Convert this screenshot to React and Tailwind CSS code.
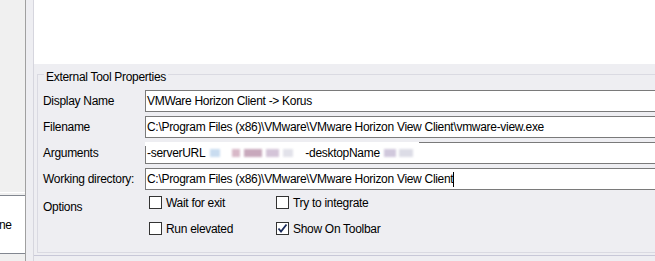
import React from 'react';

const fields = [
  { label: 'Display Name', value: 'VMWare Horizon Client -> Korus' },
  { label: 'Filename', value: 'C:\\Program Files (x86)\\VMware\\VMware Horizon View Client\\vmware-view.exe' },
  { label: 'Arguments', value: null },
  { label: 'Working directory:', value: 'C:\\Program Files (x86)\\VMware\\VMware Horizon View Client', caret: true },
];

const options = [
  { label: 'Wait for exit', checked: false },
  { label: 'Try to integrate', checked: false },
  { label: 'Run elevated', checked: false },
  { label: 'Show On Toolbar', checked: true },
];

const Blur = ({ className }) => <span className={`inline-block h-[8px] blur-[1.2px] ${className}`} />;

const ArgumentsValue = () => (
  <div className="flex items-center">
    <span>-serverURL</span>
    <span className="ml-[5px] flex items-center">
      <Blur className="w-[10px] bg-[#c9dcf0]" />
      <Blur className="ml-[12px] w-[8px] bg-[#d8b8c8]" />
      <Blur className="ml-[4px] w-[18px] bg-[#c8a8bc]" />
      <Blur className="ml-[4px] w-[13px] bg-[#d4c4d8]" />
      <Blur className="ml-[4px] w-[10px] bg-[#e2e2ea]" />
    </span>
    <span className="ml-[12px]">-desktopName</span>
    <span className="ml-[4px] flex items-center">
      <Blur className="w-[12px] bg-[#d0c8dc]" />
      <Blur className="ml-[3px] w-[14px] bg-[#dcdce6]" />
    </span>
  </div>
);

const Checkbox = ({ checked, label }) => (
  <label className="flex items-center h-[13px] whitespace-nowrap">
    <span className="w-[13px] h-[13px] shrink-0 border border-[#333333] bg-white flex items-center justify-center">
      {checked ? (
        <svg width="11" height="11" viewBox="0 0 11 11">
          <path d="M1.5 5.5 L4 8.5 L9.5 1.5" fill="none" stroke="#1a2a5a" strokeWidth="1.8" />
        </svg>
      ) : null}
    </span>
    <span className="ml-[4px]">{label}</span>
  </label>
);

const App = () => {
  return (
    <div
      className="w-[655px] h-[261px] flex bg-[#eeeef2] overflow-hidden text-[12px] tracking-[-0.3px] text-black"
      style={{ fontFamily: '"Liberation Sans", Arial, sans-serif' }}
    >
      <div className="w-[26px] shrink-0 flex flex-col bg-[#f0f0f0] border-r border-[#a0a0a0]">
        <div className="h-[192px]" />
        <div className="h-px bg-white" />
        <div className="h-[2px]" />
        <div className="h-[59px] bg-white border-y border-[#828790] overflow-hidden flex items-center">
          <span className="-ml-[1px] whitespace-nowrap">ne</span>
        </div>
      </div>
      <div className="w-[7px] shrink-0" />
      <div className="flex-1 min-w-0 flex flex-col border-l border-[#d6d6de] overflow-hidden">
        <div className="h-[64px] bg-white shrink-0" />
        <div className="relative mt-[10px] ml-[3px] w-[700px] h-[179px] border border-[#dadae2] pl-[5px] pt-[15px]">
          <span className="absolute -top-[4px] left-[6px] px-[2px] bg-[#eeeef2] leading-[12px]">External Tool Properties</span>
          <div className="flex flex-col gap-[4px]">
            {fields.map((field) => (
              <div key={field.label} className="flex items-center h-[22px]">
                <span className="w-[102px] shrink-0 whitespace-nowrap">{field.label}</span>
                <div className="relative flex-1 h-[22px] border border-[#7a7a7a] bg-white pl-[1px] flex items-center whitespace-nowrap">
                  {field.value === null ? (
                    <>
                      <div className="absolute -top-px -left-px w-[274px] h-[4px] bg-white" />
                      <ArgumentsValue />
                    </>
                  ) : (
                    <span>{field.value}</span>
                  )}
                  {field.caret ? <span className="w-px h-[15px] bg-black" /> : null}
                </div>
              </div>
            ))}
          </div>
          <div className="flex mt-[6px]">
            <span className="w-[102px] shrink-0 pt-[2px]">Options</span>
            <div className="grid grid-cols-[127px_140px] gap-y-[13px] pl-[4px]">
              {options.map((option) => (
                <Checkbox key={option.label} checked={option.checked} label={option.label} />
              ))}
            </div>
          </div>
        </div>
        <div className="mt-[2px] h-px bg-[#c8c8d8]" />
      </div>
    </div>
  );
};

export default App;
